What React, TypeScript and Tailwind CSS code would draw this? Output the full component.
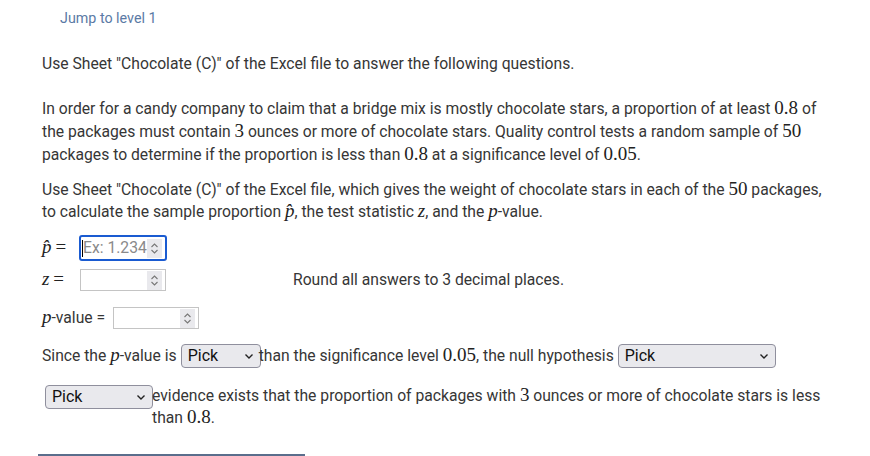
import React from "react";

const M = ({ children, i = false }: { children: React.ReactNode; i?: boolean }) => (
  <span
    className={`text-[19px] leading-[1] text-[#222] ${i ? "italic" : ""}`}
    style={{ fontFamily: '"Liberation Serif", "DejaVu Serif", serif' }}
  >
    {children}
  </span>
);

const Spinner = () => (
  <span className="flex h-[19px] w-[15px] items-center justify-center bg-[#e9e9ed]">
    <svg width="9" height="13" viewBox="0 0 9 13" fill="none" stroke="#777" strokeWidth="1.1">
      <path d="M1.5 5 L4.5 2 L7.5 5" />
      <path d="M1.5 8 L4.5 11 L7.5 8" />
    </svg>
  </span>
);

const NumInput = ({ focused = false, placeholder = "" }: { focused?: boolean; placeholder?: string }) => (
  <span
    className={`inline-flex items-center justify-between bg-white pr-[3px] ${
      focused
        ? "-mx-[1px] h-[26px] w-[88px] rounded-[3px] border-[2px] border-[#1a5bd1] pl-[1px]"
        : "h-[22px] w-[86px] border border-[#c4c4c4] pl-[2px]"
    }`}
  >
    <span className="flex items-center overflow-hidden whitespace-nowrap text-[15.7px] text-[#8a8a8a]">
      {focused && <span className="inline-block h-[17px] w-[1px] bg-black" />}
      {placeholder}
    </span>
    <Spinner />
  </span>
);

const Select = ({ w }: { w: string }) => (
  <span
    className={`inline-flex h-[24px] ${w} items-center justify-between rounded-[4px] border border-[#8f8f9d] bg-[#e9e9ed] pl-[6px] pr-[6px] align-middle text-[16px] text-[#111]`}
  >
    <span>Pick</span>
    <svg width="10" height="8" viewBox="0 0 10 8" fill="none" stroke="#222" strokeWidth="1.4">
      <path d="M1.5 2.5 L5 6 L8.5 2.5" />
    </svg>
  </span>
);

export default function App() {
  return (
    <div
      className="relative h-[456px] w-[870px] overflow-hidden bg-white text-[15.7px] text-[#363636]"
      style={{ fontFamily: 'Roboto, "Liberation Sans", Arial, sans-serif' }}
    >
      <div className="pl-[60px] pt-[8px] text-[14.3px] leading-[20px] text-[#5b7aa5]">Jump to level 1</div>
      <div className="pl-[42px]">
        <p className="mt-[25px] leading-[22px]">
          Use Sheet "Chocolate (C)" of the Excel file to answer the following questions.
        </p>
        <p className="mt-[22px] w-[790px] leading-[23px]">
          In order for a candy company to claim that a bridge mix is mostly chocolate stars, a proportion of at least{" "}
          <M>0.8</M> of the packages must contain <M>3</M> ounces or more of chocolate stars. Quality control tests a
          random sample of <M>50</M> packages to determine if the proportion is less than <M>0.8</M> at a significance
          level of <M>0.05</M>.
        </p>
        <p className="mt-[13px] w-[790px] leading-[22px]">
          Use Sheet "Chocolate (C)" of the Excel file, which gives the weight of chocolate stars in each of the{" "}
          <M>50</M> packages, to calculate the sample proportion <M i>p̂</M>, the test statistic <M i>z</M>, and the{" "}
          <M i>p</M>-value.
        </p>

        <div className="mt-[12px] flex h-[26px] items-center">
          <span className="w-[38px]">
            <M i>p̂</M> <M>=</M>
          </span>
          <NumInput focused placeholder="Ex: 1.234" />
        </div>

        <div className="mt-[8px] flex h-[22px] items-center">
          <span className="w-[38px]">
            <M i>z</M> <M>=</M>
          </span>
          <NumInput />
          <span className="ml-[127px]">Round all answers to 3 decimal places.</span>
        </div>

        <div className="mt-[16px] flex h-[22px] items-center">
          <span className="w-[71px]">
            <M i>p</M>-value =
          </span>
          <NumInput />
        </div>

        <div className="mt-[15px] flex h-[24px] items-center whitespace-nowrap">
          <span>
            Since the <M i>p</M>-value is
          </span>
          <span className="ml-[4px] -mr-[2px]">
            <Select w="w-[80px]" />
          </span>
          <span>
            than the significance level <M>0.05</M>, the null hypothesis
          </span>
          <span className="ml-[4px]">
            <Select w="w-[158px]" />
          </span>
        </div>

        <div className="mt-[16px] flex items-start">
          <span className="ml-[3px] shrink-0">
            <Select w="w-[108px]" />
          </span>
          <p className="-ml-[1px] pt-[1px] leading-[22px]">
            evidence exists that the proportion of packages with <M>3</M> ounces or more of chocolate stars is less
            <br />
            than <M>0.8</M>.
          </p>
        </div>
      </div>
      <div className="absolute bottom-0 left-[38px] h-[2px] w-[267px] bg-[#5a6e8c]" />
    </div>
  );
}
